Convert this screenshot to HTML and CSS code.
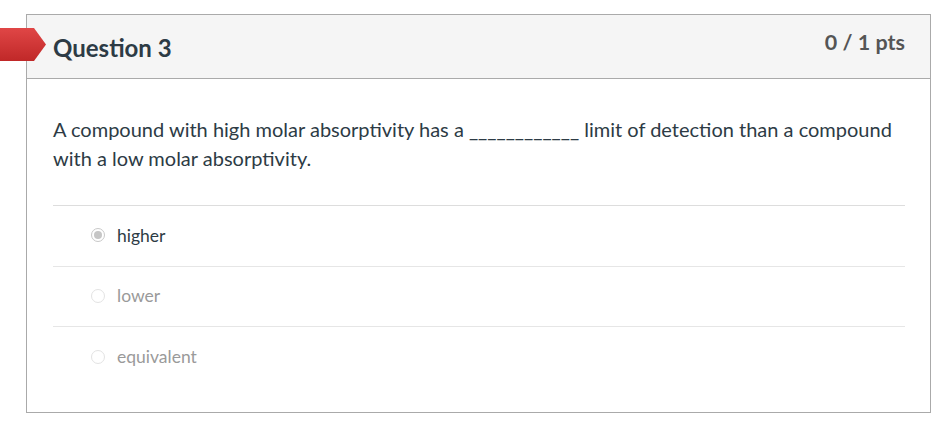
FILE: index.html
```html
<!DOCTYPE html>
<html>
<head>
<meta charset="utf-8">
<link rel="stylesheet" href="styles.css">
</head>
<body>
<div class="flag"></div>
<div class="question">
  <div class="header">
    <span class="title">Question 3</span>
    <span class="pts">0 / 1 pts</span>
  </div>
  <div class="content">
    <p class="text">A compound with high molar absorptivity has a ____________ limit of detection than a compound with a low molar absorptivity.</p>
    <div class="answers">
      <div class="answer selected"><span class="radio"></span><span class="label">higher</span></div>
      <div class="answer"><span class="radio"></span><span class="label">lower</span></div>
      <div class="answer"><span class="radio"></span><span class="label">equivalent</span></div>
    </div>
  </div>
</div>
</body>
</html>
```
FILE: styles.css
```css
html, body {
  margin: 0;
  padding: 0;
  background: #fff;
  font-family: Lato, "Open Sans", sans-serif;
  color: #2d3b45;
}
body {
  position: relative;
  width: 940px;
  height: 425px;
  overflow: hidden;
}
.flag {
  position: absolute;
  left: 0;
  top: 28px;
  width: 46px;
  height: 33px;
  background: linear-gradient(#e04646, #c02828);
  clip-path: polygon(0 0, 34px 0, 46px 50%, 34px 100%, 0 100%);
}
.question {
  margin: 14px 0 0 26px;
  width: 903px;
  height: 397px;
  border: 1px solid #aaaaaa;
  box-sizing: content-box;
}
.header {
  height: 63px;
  background: #f5f5f5;
  border-bottom: 1px solid #aaaaaa;
  display: flex;
  justify-content: space-between;
  padding: 0 25px 0 26px;
}
.title {
  font-size: 24px;
  font-weight: 700;
  color: #2d3b45;
  margin-top: 18px;
  line-height: 30px;
}
.pts {
  font-size: 21.5px;
  font-weight: 700;
  color: #555555;
  margin-top: 14px;
  line-height: 26px;
}
.content {
  padding: 0 25px 0 26px;
}
.text {
  margin: 0;
  padding: 36px 0 32px;
  font-size: 20px;
  line-height: 29px;
  color: #2d3b45;
  border-bottom: 1px solid #dddddd;
}
.answer {
  height: 60.5px;
  box-sizing: border-box;
  padding-bottom: 1px;
  display: flex;
  align-items: center;
  padding-left: 38px;
  border-bottom: 1px solid #e6e6e6;
}
.answer:last-child {
  border-bottom: none;
}
.radio {
  width: 14px;
  height: 14px;
  border-radius: 50%;
  border: 1px solid #e3e3e3;
  box-sizing: border-box;
  margin-right: 12px;
  background: #fff;
  position: relative;
}
.answer.selected .radio {
  border: 1px solid #c8c8c8;
  background: #fff;
}
.answer.selected .radio::after {
  content: "";
  position: absolute;
  left: 2px;
  top: 2px;
  width: 8px;
  height: 8px;
  border-radius: 50%;
  background: #c6c6c6;
}
.label {
  font-size: 17.5px;
  color: #9a9a9a;
}
.answer.selected .label {
  color: #2d3b45;
}
```
